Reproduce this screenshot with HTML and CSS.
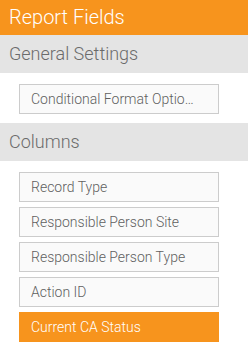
FILE: index.html
```html
<!DOCTYPE html>
<html lang="en">
<head>
  <meta charset="UTF-8">
  <title>Report Fields</title>
  <link rel="stylesheet" href="styles.css">
</head>
<body>
  <div class="panel">
    <div class="panel-title">Report Fields</div>

    <div class="group-title">General Settings</div>
    <ul class="field-list">
      <li class="field">Conditional Format Optio…</li>
    </ul>

    <div class="group-title columns">Columns</div>
    <ul class="field-list">
      <li class="field">Record Type</li>
      <li class="field">Responsible Person Site</li>
      <li class="field">Responsible Person Type</li>
      <li class="field">Action ID</li>
      <li class="field active">Current CA Status</li>
    </ul>
  </div>
</body>
</html>
```

FILE: styles.css
```css
:root {
  --orange: #f7941d;
  --bar-grey: #e4e4e4;
  --border: #cccccc;
  --text: #666666;
}

* {
  margin: 0;
  padding: 0;
  box-sizing: border-box;
}

body {
  background: #ffffff;
  font-family: Roboto, 'Liberation Sans', sans-serif;
  font-weight: 300;
  color: var(--text);
}

.panel {
  width: 248px;
}

.panel-title {
  height: 35px;
  line-height: 35px;
  padding-left: 9px;
  background: var(--orange);
  color: #ffffff;
  font-size: 20px;
}

.group-title {
  height: 38px;
  line-height: 38px;
  padding-left: 9px;
  background: var(--bar-grey);
  color: #6b6b6b;
  font-size: 18px;
}

.group-title.columns {
  margin-top: 9px;
}

.field-list {
  list-style: none;
  display: flex;
  flex-direction: column;
  gap: 5px;
  padding: 11px 0 0 19px;
}

.field {
  width: 200px;
  height: 30px;
  line-height: 28px;
  padding-left: 11px;
  border: 1px solid var(--border);
  background: #fafafa;
  font-size: 14px;
  color: #5f5f5f;
  white-space: nowrap;
  overflow: hidden;
}

.field.active {
  background: var(--orange);
  border-color: var(--orange);
  color: #ffffff;
}
```
